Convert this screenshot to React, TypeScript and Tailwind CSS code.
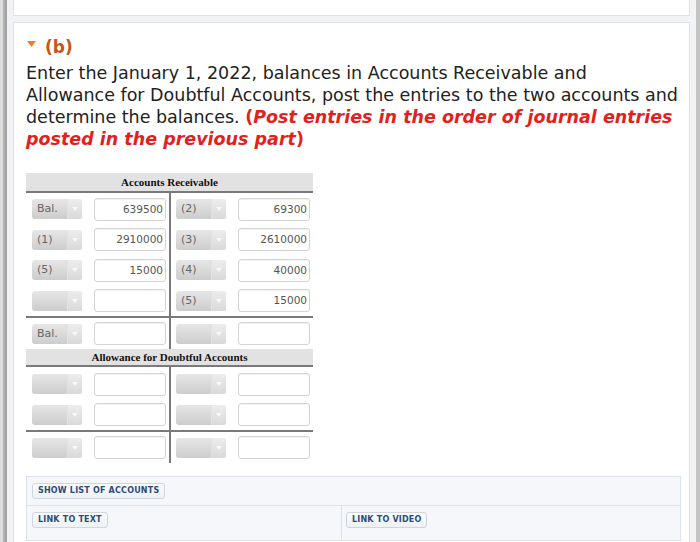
const sans = "font-['DejaVu_Sans',sans-serif]";

function Sel({ label }: { label?: string }) {
  return (
    <div className="flex h-[20px] w-[50px] overflow-hidden rounded-[3px] bg-gradient-to-b from-[#e6e6e6] to-[#cdcdcd]">
      <div className="flex-1 pl-[5px] text-[11px] leading-[20px] text-[#666]">{label}</div>
      <div className="flex w-[15px] items-center justify-center border-l border-[#e2e2e2] bg-gradient-to-b from-[#ededed] to-[#d9d9d9]">
        <svg width="6" height="4" viewBox="0 0 6 4">
          <path d="M0 0h6L3 4z" fill="#f8f8f8" />
        </svg>
      </div>
    </div>
  );
}

function Inp({ value }: { value?: string }) {
  return (
    <div className="h-[23px] w-[72px] rounded-[3px] border border-[#d4d4d4] bg-white pr-[2px] text-right text-[10.5px] leading-[21px] text-[#555] shadow-[inset_0_1px_1px_rgba(0,0,0,0.06)]">
      {value}
    </div>
  );
}

type Side = [string?, string?];

function Row({ l, r, h = 'h-[30.5px]', top = false }: { l: Side; r: Side; h?: string; top?: boolean }) {
  return (
    <div className={`flex ${h} ${top ? 'border-t-2 border-[#7a7a7a]' : ''}`}>
      <div className="flex w-[145px] items-center gap-[12px] border-r-2 border-[#7a7a7a] pl-[6px]">
        <Sel label={l[0]} />
        <Inp value={l[1]} />
      </div>
      <div className="flex flex-1 items-center gap-[12px] pl-[5px]">
        <Sel label={r[0]} />
        <Inp value={r[1]} />
      </div>
    </div>
  );
}

function Header({ title, h }: { title: string; h: string }) {
  return (
    <div
      className={`${h} border-b-2 border-[#7a7a7a] bg-[#e2e2e2] text-center font-['Liberation_Serif',serif] text-[11px] font-bold text-[#111]`}
    >
      {title}
    </div>
  );
}

// small spacer that keeps the T-account's middle line going
function Gap({ h }: { h: string }) {
  return <div className={`${h} w-[145px] border-r-2 border-[#7a7a7a]`} />;
}

function Btn({ children }: { children: string }) {
  return (
    <div className="h-[16px] rounded-[3px] border border-[#cfd6df] bg-gradient-to-b from-[#fafbfd] to-[#eef1f5] px-[5px] text-[8px] font-bold leading-[14px] tracking-[0.2px] text-[#2d4a78]">
      {children}
    </div>
  );
}

export default function App() {
  return (
    <div className={`flex h-[542px] w-[700px] overflow-hidden bg-white ${sans}`}>
      <div className="w-[3px] shrink-0 bg-[#dcdcdc]" />
      <div className="w-[4px] shrink-0 bg-gradient-to-r from-[#b8b8b8] to-[#9c9c9c]" />
      <div className="flex min-w-0 flex-1 flex-col bg-[#f1f3f7] pl-[6px]">
        <div className="h-[16px] border-x border-b border-[#dde2e9] bg-white" />
        <div className="mt-[6px] flex-1 overflow-hidden border border-b-0 border-[#dde2e9] bg-white pl-[12px] pr-[8px] pt-[12px]">
          <div className="flex items-center text-[17px] font-bold leading-[24px] text-[#c4561c]">
            <svg width="9" height="6" viewBox="0 0 9 6" className="ml-[1px] mr-[9px] -mt-[6px]">
              <path d="M0 0h9L4.5 6z" fill="#ef7c2f" />
            </svg>
            (b)
          </div>
          <p className="mt-[3px] whitespace-nowrap text-[17.5px] leading-[22px] text-[#222]">
            Enter the January 1, 2022, balances in Accounts Receivable and
            <br />
            Allowance for Doubtful Accounts, post the entries to the two accounts and
            <br />
            determine the balances.{' '}
            <span className="font-bold text-[#e3211c]">
              (<i>Post entries in the order of journal entries</i>
              <br />
              <i>posted in the previous part</i>)
            </span>
          </p>

          <div className="mt-[23px] w-[287px]">
            <Header title="Accounts Receivable" h="h-[20px] leading-[18px]" />
            <Gap h="h-[1px]" />
            <Row l={['Bal.', '639500']} r={['(2)', '69300']} />
            <Row l={['(1)', '2910000']} r={['(3)', '2610000']} />
            <Row l={['(5)', '15000']} r={['(4)', '40000']} />
            <Row l={['', '']} r={['(5)', '15000']} />
            <Row l={['Bal.', '']} r={['', '']} h="h-[33px]" top />
            <Header title="Allowance for Doubtful Accounts" h="h-[18px] leading-[16px]" />
            <Gap h="h-[2px]" />
            <Row l={['', '']} r={['', '']} />
            <Row l={['', '']} r={['', '']} />
            <Row l={['', '']} r={['', '']} h="h-[33px]" top />
          </div>

          <div className="mt-[13px] w-[655px] border border-[#dde3ea] bg-[#f5f7fa]">
            <div className="flex h-[29px] items-start border-b border-[#dde3ea] pl-[5px] pt-[6px]">
              <Btn>SHOW LIST OF ACCOUNTS</Btn>
            </div>
            <div className="flex h-[34px]">
              <div className="flex w-[315px] items-start border-r border-[#dde3ea] pl-[5px] pt-[6px]">
                <Btn>LINK TO TEXT</Btn>
              </div>
              <div className="flex items-start pl-[4px] pt-[6px]">
                <Btn>LINK TO VIDEO</Btn>
              </div>
            </div>
          </div>
        </div>
      </div>
      <div className="w-[6px] shrink-0 bg-[#f1f3f7]" />
      <div className="w-[4px] shrink-0 bg-[#c4c4c4]" />
    </div>
  );
}
